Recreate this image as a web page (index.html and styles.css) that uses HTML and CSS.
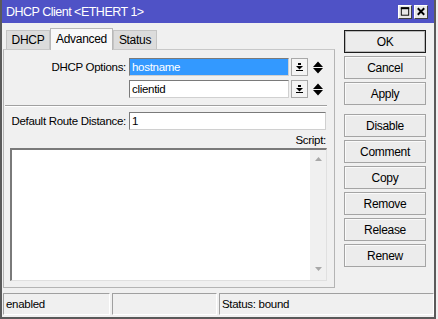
FILE: index.html
```html
<!DOCTYPE html>
<html>
    <head>
        <meta charset="UTF-8">
        <title>DHCP Client</title>
        <link rel="stylesheet" href="styles.css">
    </head>
    <body>
        <div class="window">
            <div class="titlebar">
                <span class="title">DHCP Client &lt;ETHERT 1&gt;</span>
                <span class="tbtn">
                    <svg width="13" height="13" viewBox="0 0 13 13"><rect x="2.5" y="2.5" width="8" height="8" fill="none" stroke="#000" stroke-width="1"/><rect x="2" y="2" width="9" height="2" fill="#000"/></svg>
                </span>
                <span class="tbtn">
                    <svg width="13" height="13" viewBox="0 0 13 13"><path d="M3 3 L10 10 M10 3 L3 10" stroke="#000" stroke-width="2"/></svg>
                </span>
            </div>

            <div class="main">
                <div class="left">
                    <div class="tabs">
                        <div class="tab t1">DHCP</div>
                        <div class="tab active">Advanced</div>
                        <div class="tab t3">Status</div>
                    </div>

                    <div class="panel">
                        <div class="row">
                            <label class="label">DHCP Options:</label>
                            <div class="input short selected">hostname</div>
                            <span class="dropbtn">
                                <svg width="9" height="9" viewBox="0 0 9 9"><rect x="3" y="0" width="3" height="2" fill="#000"/><path d="M1 3 H8 L4.5 6.5 Z" fill="#000"/><rect x="1" y="7" width="7" height="1" fill="#000"/></svg>
                            </span>
                            <span class="updown">
                                <svg width="10" height="13" viewBox="0 0 10 13"><path d="M0 6 L5 0.5 L10 6 Z M0 7 L5 12.5 L10 7 Z" fill="#000"/></svg>
                            </span>
                        </div>
                        <div class="row">
                            <label class="label"></label>
                            <div class="input short">clientid</div>
                            <span class="dropbtn">
                                <svg width="9" height="9" viewBox="0 0 9 9"><rect x="3" y="0" width="3" height="2" fill="#000"/><path d="M1 3 H8 L4.5 6.5 Z" fill="#000"/><rect x="1" y="7" width="7" height="1" fill="#000"/></svg>
                            </span>
                            <span class="updown">
                                <svg width="10" height="13" viewBox="0 0 10 13"><path d="M0 6 L5 0.5 L10 6 Z M0 7 L5 12.5 L10 7 Z" fill="#000"/></svg>
                            </span>
                        </div>

                        <div class="sep"></div>

                        <div class="row">
                            <label class="label">Default Route Distance:</label>
                            <div class="input long">1</div>
                        </div>

                        <div class="scriptlabel">Script:</div>
                        <div class="script">
                            <div class="scroll">
                                <svg width="7" height="4" viewBox="0 0 7 4"><path d="M0 4 L3.5 0 L7 4 Z" fill="#a8a8a8"/></svg>
                                <svg width="7" height="4" viewBox="0 0 7 4"><path d="M0 0 L3.5 4 L7 0 Z" fill="#a8a8a8"/></svg>
                            </div>
                        </div>
                    </div>
                </div>

                <div class="buttons">
                    <button class="btn ok">OK</button>
                    <button class="btn">Cancel</button>
                    <button class="btn">Apply</button>
                    <button class="btn gap">Disable</button>
                    <button class="btn">Comment</button>
                    <button class="btn">Copy</button>
                    <button class="btn">Remove</button>
                    <button class="btn">Release</button>
                    <button class="btn">Renew</button>
                </div>
            </div>

            <div class="statusbar">
                <div class="pane p1">enabled</div>
                <div class="pane p2"></div>
                <div class="pane p3">Status: bound</div>
            </div>
        </div>
    </body>
</html>
```

FILE: styles.css
```css
* {
    margin: 0;
    padding: 0;
    box-sizing: border-box;
}

html, body {
    width: 100%;
    height: 100%;
    background-color: #f0f0f0;
    font-family: "Liberation Sans", Arial, sans-serif;
    font-size: 11.5px;
    letter-spacing: -0.3px;
    color: #000;
    white-space: nowrap;
}

.window {
    width: 436px;
    height: 319px;
    border-left: 2px solid #5a5a5a;
    border-right: 2px solid #5a5a5a;
    border-bottom: 2px solid #5a5a5a;
    display: flex;
    flex-direction: column;
    background-color: #f0f0f0;
}

.titlebar {
    height: 23px;
    background-color: #4f52c6;
    display: flex;
    align-items: center;
    padding: 0 6px 0 4px;
    gap: 2px;
}

.title {
    flex: 1;
    color: #fff;
    font-size: 12.5px;
    letter-spacing: -0.5px;
}

.tbtn {
    width: 14px;
    height: 14px;
    background-color: #e8e8e8;
    border: 1px solid #fff;
    border-right-color: #404040;
    border-bottom-color: #404040;
    display: flex;
    align-items: center;
    justify-content: center;
}

.main {
    flex: 1;
    display: flex;
}

.left {
    width: 333px;
    padding-left: 1px;
    display: flex;
    flex-direction: column;
}

.tabs {
    display: flex;
    align-items: flex-end;
    height: 25px;
    padding-left: 3px;
    margin-top: 1px;
}

.tab {
    height: 19px;
    display: flex;
    align-items: center;
    justify-content: center;
    background-color: #dcdcdc;
    border: 1px solid #c4c4c4;
    border-bottom: none;
    font-size: 12px;
}

.t1 {
    width: 44px;
}

.t3 {
    width: 44px;
}

.tab.active {
    width: 63px;
    height: 22px;
    background-color: #f8f8f8;
    border-color: #b8b8b8;
    margin-bottom: -1px;
    position: relative;
    align-items: flex-start;
    padding-top: 3px;
}

.panel {
    flex: 1;
    border: 1px solid #b4b4b4;
    border-top-color: #c8c8c8;
    padding: 8px 7px 6px 6px;
    display: flex;
    flex-direction: column;
    margin-bottom: 3px;
}

.row {
    display: flex;
    align-items: center;
    height: 18px;
    margin-bottom: 4px;
}

.label {
    width: 119px;
    text-align: right;
    padding-right: 3px;
}

.input {
    height: 18px;
    background-color: #fff;
    border: 1px solid #7a7a7a;
    border-right-color: #d0d0d0;
    border-bottom-color: #d0d0d0;
    padding-left: 2px;
    display: flex;
    align-items: center;
}

.input.short {
    width: 160px;
}

.input.long {
    width: 197px;
}

.input.selected {
    background-color: #3399ff;
    color: #fff;
}

.dropbtn {
    width: 17px;
    height: 18px;
    margin-left: 2px;
    border: 1px solid #a8a8a8;
    background-color: #f4f4f4;
    display: flex;
    align-items: center;
    justify-content: center;
}

.updown {
    margin-left: 5px;
    display: flex;
    align-items: center;
}

.sep {
    height: 2px;
    border-top: 1px solid #a0a0a0;
    border-bottom: 1px solid #fff;
    margin: 3px 0 5px -5px;
    width: 322px;
}

.scriptlabel {
    text-align: right;
    width: 316px;
    height: 14px;
}

.script {
    flex: 1;
    width: 317px;
    background-color: #fff;
    border: 2px solid #7a7a7a;
    border-right: 1px solid #e0e0e0;
    border-bottom: 1px solid #e0e0e0;
    display: flex;
    justify-content: flex-end;
}

.scroll {
    width: 16px;
    background-color: #f0f0f0;
    display: flex;
    flex-direction: column;
    justify-content: space-between;
    align-items: center;
    padding: 7px 0 9px;
}

.buttons {
    display: flex;
    flex-direction: column;
    padding: 7px 0 0 9px;
    gap: 3px;
}

.btn {
    width: 82px;
    height: 23px;
    font-family: "Liberation Sans", Arial, sans-serif;
    font-size: 12px;
    letter-spacing: -0.3px;
    background-color: #ececec;
    border: 1px solid #a4a4a4;
    box-shadow: inset 1px 1px 0 #fafafa;
    color: #000;
}

.btn.ok {
    border: 1px solid #1c1c1c;
    box-shadow: inset 0 0 0 1px #b8b8b8;
}

.btn.gap {
    margin-top: 6px;
}

.statusbar {
    height: 26px;
    display: flex;
    padding: 2px 0 2px 1px;
    gap: 2px;
}

.pane {
    border: 1px solid #a0a0a0;
    border-right-color: #fff;
    border-bottom-color: #fff;
    padding-left: 2px;
    display: flex;
    align-items: center;
}

.p1 {
    width: 107px;
}

.p2 {
    width: 105px;
}

.p3 {
    flex: 1;
}
```
